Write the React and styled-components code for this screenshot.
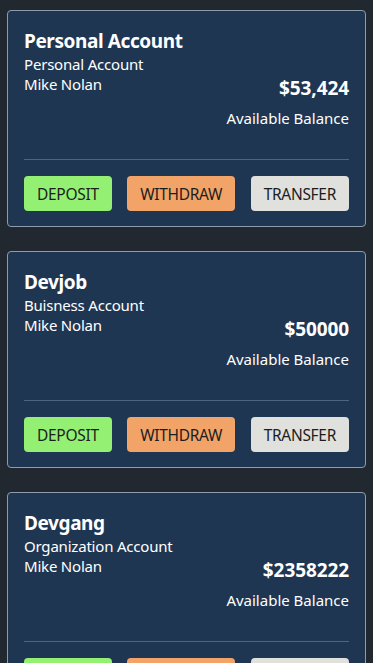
import styled, { createGlobalStyle } from 'styled-components'

const accounts = [
    { name: 'Personal Account', type: 'Personal Account', owner: 'Mike Nolan', balance: '$53,424' },
    { name: 'Devjob', type: 'Buisness Account', owner: 'Mike Nolan', balance: '$50000' },
    { name: 'Devgang', type: 'Organization Account', owner: 'Mike Nolan', balance: '$2358222' },
]

export default function App() {
    return (
        <>
            <GlobalStyle />
            <Page>
                {accounts.map((acc) => (
                    <Card key={acc.name}>
                        <Top>
                            <Info>
                                <Title>{acc.name}</Title>
                                <Sub>{acc.type}</Sub>
                                <Sub>{acc.owner}</Sub>
                            </Info>
                            <Balance>
                                <Amount>{acc.balance}</Amount>
                                <Label>Available Balance</Label>
                            </Balance>
                        </Top>
                        <Divider />
                        <Actions>
                            <Action $bg="#93f073">Deposit</Action>
                            <Action $bg="#f2a367">Withdraw</Action>
                            <Action $bg="#e0e0dc">Transfer</Action>
                        </Actions>
                    </Card>
                ))}
            </Page>
        </>
    )
}

const GlobalStyle = createGlobalStyle`
body {
    margin: 0;
    background: #222830;
    font-family: "Noto Sans", "Open Sans", sans-serif;
}
`

const Page = styled.div`
display: flex;
flex-direction: column;
gap: 24px;
padding: 10px 7px;
`

const Card = styled.div`
background: #1f3652;
border: 1px solid #8d9cad;
border-radius: 4px;
padding: 17px 16px 15px;
color: #fff;
`

const Top = styled.div`
display: flex;
justify-content: space-between;
`

const Info = styled.div`
display: flex;
flex-direction: column;
`

const Title = styled.h2`
margin: 0;
font-size: 19px;
line-height: 26px;
font-weight: 700;
letter-spacing: -0.4px;
`

const Sub = styled.div`
font-size: 15px;
line-height: 20px;
letter-spacing: -0.2px;
`

const Balance = styled.div`
text-align: right;
padding-top: 47px;
`

const Amount = styled.div`
font-size: 19px;
line-height: 26px;
font-weight: 700;
letter-spacing: -0.1px;
`

const Label = styled.div`
margin-top: 7px;
font-size: 15px;
line-height: 20px;
`

const Divider = styled.hr`
margin: 31px 0 16px;
border: 0;
border-top: 1px solid #4e6480;
`

const Actions = styled.div`
display: flex;
justify-content: space-between;
`

const Action = styled.button`
height: 35px;
padding: 0 13px;
border: 0;
border-radius: 4px;
background: ${(p) => p.$bg};
color: #1d1d1d;
font-family: inherit;
font-size: 15.5px;
text-transform: uppercase;
letter-spacing: -0.3px;
cursor: pointer;
`
